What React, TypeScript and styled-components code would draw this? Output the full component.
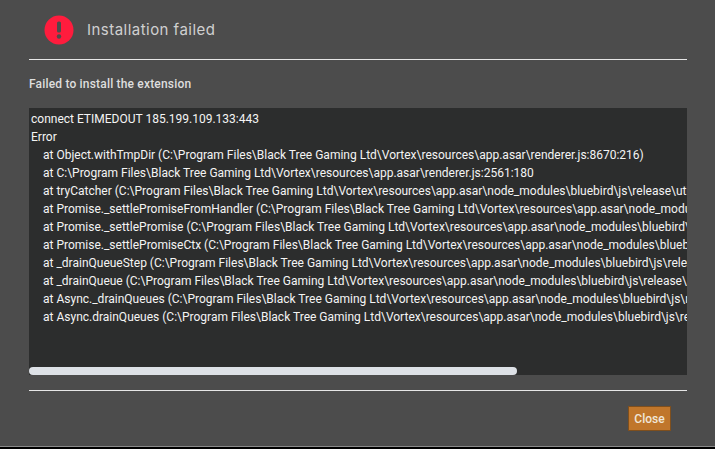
import React from "react";
import styled, { createGlobalStyle } from "styled-components";

const stack = [
  "at Object.withTmpDir (C:\\Program Files\\Black Tree Gaming Ltd\\Vortex\\resources\\app.asar\\renderer.js:8670:216)",
  "at C:\\Program Files\\Black Tree Gaming Ltd\\Vortex\\resources\\app.asar\\renderer.js:2561:180",
  "at tryCatcher (C:\\Program Files\\Black Tree Gaming Ltd\\Vortex\\resources\\app.asar\\node_modules\\bluebird\\js\\release\\util.js:16:23)",
  "at Promise._settlePromiseFromHandler (C:\\Program Files\\Black Tree Gaming Ltd\\Vortex\\resources\\app.asar\\node_modules\\bluebird\\js\\release\\promise.js:512:31)",
  "at Promise._settlePromise (C:\\Program Files\\Black Tree Gaming Ltd\\Vortex\\resources\\app.asar\\node_modules\\bluebird\\js\\release\\promise.js:569:18)",
  "at Promise._settlePromiseCtx (C:\\Program Files\\Black Tree Gaming Ltd\\Vortex\\resources\\app.asar\\node_modules\\bluebird\\js\\release\\promise.js:606:10)",
  "at _drainQueueStep (C:\\Program Files\\Black Tree Gaming Ltd\\Vortex\\resources\\app.asar\\node_modules\\bluebird\\js\\release\\async.js:142:12)",
  "at _drainQueue (C:\\Program Files\\Black Tree Gaming Ltd\\Vortex\\resources\\app.asar\\node_modules\\bluebird\\js\\release\\async.js:131:9)",
  "at Async._drainQueues (C:\\Program Files\\Black Tree Gaming Ltd\\Vortex\\resources\\app.asar\\node_modules\\bluebird\\js\\release\\async.js:147:5)",
  "at Async.drainQueues (C:\\Program Files\\Black Tree Gaming Ltd\\Vortex\\resources\\app.asar\\node_modules\\bluebird\\js\\release\\async.js:17:14)",
];

const GlobalStyle = createGlobalStyle`
  html, body {
    margin: 0;
    height: 100%;
    overflow: hidden;
    background: #000;
  }
`;

const Dialog = styled.div`
  box-sizing: border-box;
  width: 715px;
  height: 447px;
  padding: 0 28px 0 29px;
  display: flex;
  flex-direction: column;
  background: #4c4c4c;
  border-bottom: 1px solid #8a8a8a;
  font-family: Roboto, "Liberation Sans", sans-serif;
`;

const Header = styled.div`
  height: 59px;
  display: flex;
  align-items: center;
  gap: 13px;
  padding-left: 15px;
  border-bottom: 1px solid #e6e6e6;
`;

const Title = styled.h4`
  margin: 0;
  font-family: Inter, "Open Sans", sans-serif;
  font-size: 15px;
  font-weight: 400;
  letter-spacing: 0.47px;
  color: #d0d0d0;
`;

const Message = styled.div`
  margin-top: 17px;
  height: 15px;
  line-height: 15px;
  font-size: 12px;
  font-weight: 500;
  letter-spacing: 0.18px;
  color: #dedede;
`;

const Details = styled.div`
  position: relative;
  margin-top: 16px;
  height: 267px;
  box-sizing: border-box;
  padding: 2px 0 0 2px;
  background: #2c2d2d;
  overflow: hidden;
`;

const Line = styled.div<{ $indent?: boolean }>`
  height: 18px;
  line-height: 18px;
  font-size: 12px;
  color: #f4f4f4;
  white-space: nowrap;
  padding-left: ${(p) => (p.$indent ? "12px" : "0")};
`;

const ScrollThumb = styled.div`
  position: absolute;
  left: 0;
  bottom: 0;
  width: 488px;
  height: 8px;
  border-radius: 4px;
  background: #dde1e6;
`;

const Footer = styled.div`
  margin-top: 15px;
  border-top: 1px solid #e6e6e6;
  display: flex;
  justify-content: flex-end;
  padding: 15px 16px 0 0;
`;

const CloseButton = styled.button`
  box-sizing: border-box;
  width: 43px;
  height: 25px;
  padding: 0;
  background: #c0762b;
  border: 1px solid #7f4f1d;
  font-family: Roboto, "Liberation Sans", sans-serif;
  font-size: 12px;
  font-weight: 500;
  color: #f0e6d8;
`;

const ErrorIcon = () => (
  <svg width="30" height="30" viewBox="0 0 30 30">
    <circle cx="15" cy="15" r="14.5" fill="#ff1c3d" />
    <rect x="13" y="6.5" width="4" height="11" rx="1.6" fill="#4c4c4c" />
    <circle cx="15" cy="21.5" r="2.2" fill="#4c4c4c" />
  </svg>
);

export default function App() {
  return (
    <>
      <GlobalStyle />
      <Dialog>
        <Header>
          <ErrorIcon />
          <Title>Installation failed</Title>
        </Header>
        <Message>Failed to install the extension</Message>
        <Details>
          <Line>connect ETIMEDOUT 185.199.109.133:443</Line>
          <Line>Error</Line>
          {stack.map((item) => (
            <Line $indent key={item}>
              {item}
            </Line>
          ))}
          <ScrollThumb />
        </Details>
        <Footer>
          <CloseButton>Close</CloseButton>
        </Footer>
      </Dialog>
    </>
  );
}
